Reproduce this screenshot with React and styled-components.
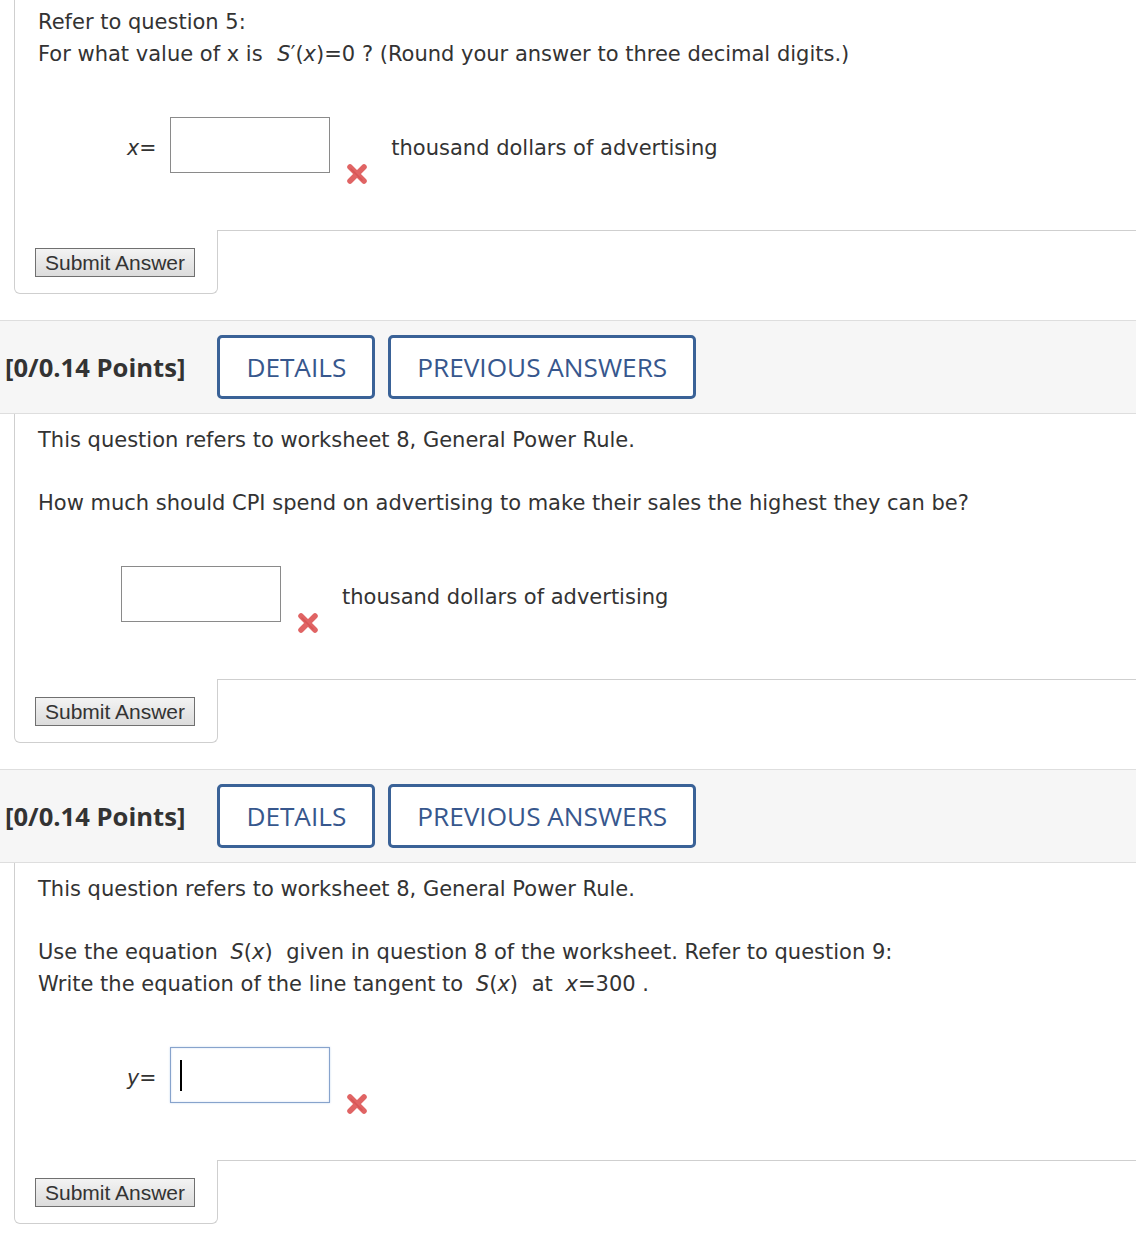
import React from "react";
import styled, { createGlobalStyle } from "styled-components";

const Global = createGlobalStyle`
  html, body { margin: 0; padding: 0; background: #fff; }
  body { font-family: "DejaVu Sans", Verdana, sans-serif; color: #333; }
  * { box-sizing: border-box; }
`;

const Page = styled.div`
  width: 1136px;
  overflow: hidden;
  padding-bottom: 24px;
`;

const Question = styled.section`
  margin-left: 14px;
`;

const Body = styled.div`
  border-left: 1px solid #cfcfcf;
  padding: ${(p) => p.$top}px 0 57px 23px;
  font-size: 21px;
  line-height: 32px;
`;

const Para = styled.p`
  margin: 0 0 31px 0;
  &:last-of-type { margin-bottom: 0; }
`;

const Math = styled.span`
  margin: 0 ${(p) => p.$l ?? 7}px 0 ${(p) => p.$r ?? 6}px;
  white-space: nowrap;
`;

const I = styled.i`
  font-style: italic;
`;

const AnswerRow = styled.div`
  display: flex;
  align-items: flex-start;
  margin-top: 47px;
  padding-left: 83px;
  height: 56px;
`;

const Label = styled.span`
  margin: 15px 14px 0 6px;
  line-height: 32px;
  font-size: 20.5px;
`;

const InputWrap = styled.div`
  position: relative;
  width: 160px;
  height: 56px;
`;

const Input = styled.input`
  width: 160px;
  height: 56px;
  border: 1px solid ${(p) => (p.$focus ? "#87a3cc" : "#8a8a8a")};
  box-shadow: ${(p) => (p.$focus ? "inset 0 0 2px #c8d8ee, 0 0 2px #c8d8ee" : "none")};
  background: #fff;
  outline: none;
  padding: 0 8px;
  font-size: 20px;
`;

const Caret = styled.span`
  position: absolute;
  left: 10px;
  top: 13px;
  width: 2px;
  height: 31px;
  background: #000;
`;

const Cross = styled.svg`
  margin: 46px 0 0 16px;
  flex: none;
`;

const Unit = styled.span`
  margin: 15px 0 0 23px;
  line-height: 32px;
  font-size: 21px;
`;

const Footer = styled.div`
  display: flex;
  align-items: flex-start;
`;

const Tab = styled.div`
  width: 204px;
  border: 1px solid #cfcfcf;
  border-top: none;
  border-radius: 0 0 6px 6px;
  padding: 18px 0 16px 20px;
`;

const Filler = styled.div`
  flex: 1;
  border-top: 1px solid #cfcfcf;
`;

const SubmitButton = styled.button`
  width: 160px;
  height: 29px;
  padding: 0;
  font-family: "Liberation Sans", Arial, sans-serif;
  font-size: 21px;
  color: #333;
  background: linear-gradient(#f3f3f3, #dcdcdc);
  border: 1px solid #707070;
  border-radius: 0;
`;

const Header = styled.div`
  display: flex;
  align-items: center;
  height: 94px;
  margin-top: 26px;
  background: #f6f6f6;
  border-top: 1px solid #dedede;
  border-bottom: 1px solid #dedede;
  padding-left: 5px;
  font-family: "Open Sans", sans-serif;
`;

const Points = styled.span`
  font-weight: 700;
  font-size: 25.6px;
  color: #333;
  margin-right: 32px;
`;

const HeadButton = styled.button`
  height: 64px;
  padding: 0 26px;
  margin-right: 13px;
  background: #fff;
  border: 3px solid #3a6297;
  border-radius: 5px;
  font-family: "Open Sans", sans-serif;
  font-weight: 500;
  font-size: 26.2px;
  color: #37578d;
`;

const XMark = () => (
  <Cross width="22" height="22" viewBox="0 0 22 22">
    <g stroke="#e06464" strokeWidth="5.5" strokeLinecap="round">
      <line x1="4" y1="4" x2="18" y2="18" />
      <line x1="18" y1="4" x2="4" y2="18" />
    </g>
    <g stroke="#d04444" strokeWidth="1.5" strokeLinecap="round" opacity="0.45">
      <line x1="5" y1="6" x2="16" y2="17" />
    </g>
  </Cross>
);

const Answer = ({ label, focus, unit }) => (
  <AnswerRow>
    {label ? (
      <Label>
        <I>{label}</I>=
      </Label>
    ) : null}
    <InputWrap>
      <Input $focus={focus} readOnly />
      {focus ? <Caret /> : null}
    </InputWrap>
    <XMark />
    {unit ? <Unit>thousand dollars of advertising</Unit> : null}
  </AnswerRow>
);

const Submit = () => (
  <Footer>
    <Tab>
      <SubmitButton>Submit Answer</SubmitButton>
    </Tab>
    <Filler />
  </Footer>
);

const QHeader = () => (
  <Header>
    <Points>[0/0.14 Points]</Points>
    <HeadButton>DETAILS</HeadButton>
    <HeadButton>PREVIOUS ANSWERS</HeadButton>
  </Header>
);

export default function App() {
  return (
    <Page>
      <Global />
      <Question>
        <Body $top={6}>
          <Para>
            Refer to question 5:
            <br />
            For what value of x is
            <Math $r={8} $l={0}>
              {" "}
              <I>S</I>′(<I>x</I>)=0
            </Math>{" "}
            ? (Round your answer to three decimal digits.)
          </Para>
          <Answer label="x" unit />
        </Body>
        <Submit />
      </Question>

      <QHeader />
      <Question>
        <Body $top={10}>
          <Para>This question refers to worksheet 8, General Power Rule.</Para>
          <Para>How much should CPI spend on advertising to make their sales the highest they can be?</Para>
          <Answer unit />
        </Body>
        <Submit />
      </Question>

      <QHeader />
      <Question>
        <Body $top={10}>
          <Para>This question refers to worksheet 8, General Power Rule.</Para>
          <Para>
            Use the equation{" "}
            <Math>
              <I>S</I>(<I>x</I>)
            </Math>{" "}
            given in question 8 of the worksheet. Refer to question 9:
            <br />
            Write the equation of the line tangent to{" "}
            <Math>
              <I>S</I>(<I>x</I>)
            </Math>{" "}
            at{" "}
            <Math $l={0}>
              <I>x</I>=300
            </Math>{" "}
            .
          </Para>
          <Answer label="y" focus />
        </Body>
        <Submit />
      </Question>
    </Page>
  );
}
